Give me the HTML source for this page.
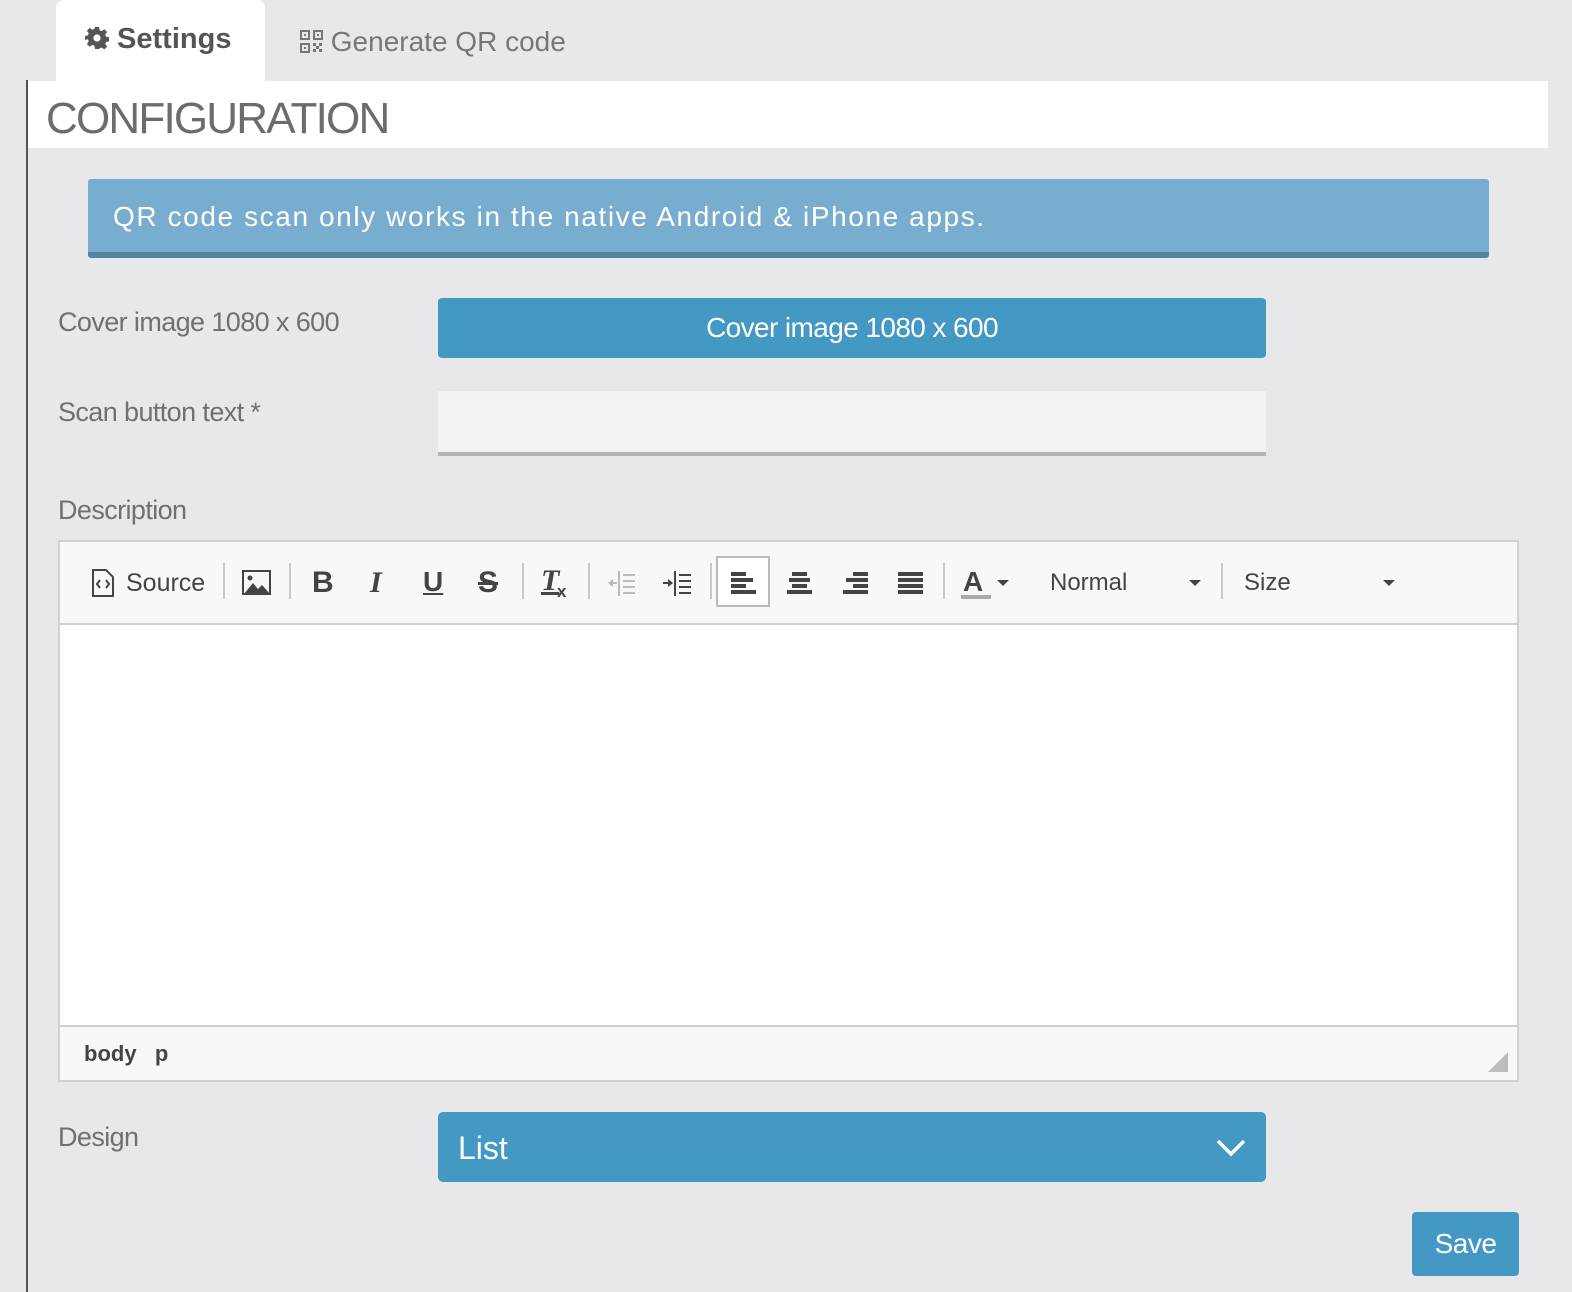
<!DOCTYPE html>
<html><head><meta charset="utf-8"><style>
*{box-sizing:border-box;margin:0;padding:0}
body{width:1572px;height:1292px;background:#e8e8ea;font-family:"Liberation Sans",sans-serif;position:relative;overflow:hidden}
.a{position:absolute}
.lbl{color:#707070;font-size:27px;font-weight:300;letter-spacing:-0.6px}
.sep{position:absolute;top:563px;width:2px;height:36px;background:#c8c8c8}
.ic{position:absolute}
</style></head><body>
<div class="a" style="left:56px;top:0;width:209px;height:82px;background:#fff;border-radius:8px 8px 0 0"></div>
<div class="a" style="left:85px;top:23px;font-size:29px;font-weight:bold;color:#555">
<svg width="24" height="24" viewBox="0 0 24 24" style="vertical-align:-2px"><path fill="#555" d="M10 1h4l.6 3.2 2 .9 2.7-1.9 2.8 2.8-1.9 2.7.9 2 3.2.6v4l-3.2.6-.9 2 1.9 2.7-2.8 2.8-2.7-1.9-2 .9L14 23h-4l-.6-3.2-2-.9-2.7 1.9-2.8-2.8 1.9-2.7-.9-2L-.3 14v-4l3.2-.6.9-2L1.9 4.7 4.7 1.9l2.7 1.9 2-.9z"/><circle cx="12" cy="12" r="3.6" fill="#fff"/></svg> Settings</div>
<div class="a" style="left:300px;top:26px;font-size:28px;color:#777;font-weight:300">
<svg width="23" height="23" viewBox="0 0 23 23" style="vertical-align:-2px"><g fill="none" stroke="#777" stroke-width="2"><rect x="1" y="1" width="8" height="8"/><rect x="14" y="1" width="8" height="8"/><rect x="1" y="14" width="8" height="8"/></g><g fill="#777"><rect x="4" y="4" width="2" height="2"/><rect x="17" y="4" width="2" height="2"/><rect x="4" y="17" width="2" height="2"/><rect x="13" y="13" width="3" height="3"/><rect x="19" y="13" width="3" height="3"/><rect x="16" y="16" width="3" height="3"/><rect x="13" y="19" width="3" height="3"/><rect x="19" y="19" width="3" height="3"/></g></svg> Generate QR code</div>
<div class="a" style="left:26px;top:80px;width:2px;height:1212px;background:#555"></div>
<div class="a" style="left:28px;top:81px;width:1520px;height:67px;background:#fff"></div>
<div class="a" style="left:46px;top:94px;font-size:44px;color:#6c6c6c;font-weight:300;letter-spacing:-1.8px">CONFIGURATION</div>
<div class="a" style="left:88px;top:179px;width:1401px;height:79px;background:#79adcf;border-bottom:6px solid #5483a0;border-radius:3px"></div>
<div class="a" style="left:113px;top:201px;font-size:28px;color:#fff;letter-spacing:1.6px">QR code scan only works in the native Android &amp; iPhone apps.</div>
<div class="a lbl" style="left:58px;top:307px">Cover image 1080 x 600</div>
<div class="a" style="left:438px;top:298px;width:828px;height:60px;background:#4398c4;border-radius:4px;color:#fff;font-size:28px;text-align:center;line-height:60px;letter-spacing:-0.6px">Cover image 1080 x 600</div>
<div class="a lbl" style="left:58px;top:397px">Scan button text *</div>
<div class="a" style="left:438px;top:389px;width:828px;height:67px;background:#f3f3f3;border-top:2px solid #e4e4e4;border-bottom:4px solid #b5b5b5"></div>
<div class="a lbl" style="left:58px;top:495px">Description</div>
<div class="a" style="left:58px;top:540px;width:1461px;height:542px;border:2px solid #d1d1d1;background:#fff"></div>
<div class="a" style="left:60px;top:542px;width:1457px;height:83px;background:#f8f8f8;border-bottom:2px solid #d1d1d1"></div>
<div class="a" style="left:60px;top:1025px;width:1457px;height:55px;background:#f8f8f8;border-top:2px solid #d1d1d1"></div>
<div class="a" style="left:84px;top:1041px;font-size:22px;font-weight:bold;color:#444">body&nbsp;&nbsp;&nbsp;p</div>
<svg class="a" style="left:1488px;top:1052px" width="22" height="20"><path d="M20 0V20H0z" fill="#bdbdbd"/></svg>
<svg class="ic" style="left:91px;top:569px" width="24" height="28" viewBox="0 0 24 28"><path d="M2 1h13l7 7v19H2z" fill="none" stroke="#444" stroke-width="2"/><path d="M9 11l-3 4 3 4M15 11l3 4-3 4" fill="none" stroke="#444" stroke-width="2"/></svg>
<div class="a" style="left:126px;top:569px;font-size:25px;color:#444">Source</div>
<div class="sep" style="left:223px"></div>
<svg class="ic" style="left:242px;top:570px" width="29" height="25"><rect x="1" y="1" width="27" height="23" fill="none" stroke="#444" stroke-width="2"/><circle cx="8" cy="8" r="2.5" fill="#444"/><path d="M2 24L11 13l5 6 4-4 8 9z" fill="#444"/></svg>
<div class="sep" style="left:289px"></div>
<div class="a" style="left:312px;top:566px;font-size:30px;font-weight:bold;color:#444">B</div>
<div class="a" style="left:370px;top:566px;font-size:30px;font-weight:bold;font-style:italic;color:#444;font-family:'Liberation Serif',serif">I</div>
<div class="a" style="left:423px;top:566px;font-size:28px;font-weight:bold;color:#444;text-decoration:underline">U</div>
<div class="a" style="left:478px;top:566px;font-size:30px;font-weight:bold;color:#444;text-decoration:line-through">S</div>
<div class="sep" style="left:522px"></div>
<div class="a" style="left:541px;top:564px;font-size:30px;font-weight:bold;font-style:italic;color:#444;font-family:'Liberation Serif',serif;text-decoration:underline">T</div>
<div class="a" style="left:557px;top:582px;font-size:17px;font-weight:bold;color:#444">x</div>
<div class="sep" style="left:588px"></div>
<svg class="ic" style="left:607px;top:571px" width="30" height="25"><g fill="#bbb"><rect x="11" y="0" width="2" height="25"/><rect x="16" y="3" width="12" height="2"/><rect x="16" y="9" width="12" height="2"/><rect x="16" y="15" width="12" height="2"/><rect x="16" y="21" width="12" height="2"/><path d="M1 12l5-4v8z"/><rect x="5" y="11" width="5" height="2"/></g></svg>
<svg class="ic" style="left:663px;top:571px" width="30" height="25"><g fill="#444"><rect x="11" y="0" width="2" height="25"/><rect x="16" y="3" width="12" height="2"/><rect x="16" y="9" width="12" height="2"/><rect x="16" y="15" width="12" height="2"/><rect x="16" y="21" width="12" height="2"/><path d="M10 12l-5-4v8z"/><rect x="0" y="11" width="5" height="2"/></g></svg>
<div class="sep" style="left:710px"></div>
<div class="a" style="left:716px;top:556px;width:54px;height:51px;border:2px solid #bbb;background:#fff"></div>
<svg class="ic" style="left:731px;top:572px" width="25" height="22"><g fill="#444"><rect y="0" width="15" height="4"/><rect y="6" width="22" height="4"/><rect y="12" width="15" height="4"/><rect y="18" width="25" height="4"/></g></svg>
<svg class="ic" style="left:787px;top:572px" width="25" height="22"><g fill="#444"><rect x="5" y="0" width="15" height="4"/><rect x="2" y="6" width="21" height="4"/><rect x="5" y="12" width="15" height="4"/><rect y="18" width="25" height="4"/></g></svg>
<svg class="ic" style="left:843px;top:572px" width="25" height="22"><g fill="#444"><rect x="10" y="0" width="15" height="4"/><rect x="3" y="6" width="22" height="4"/><rect x="10" y="12" width="15" height="4"/><rect y="18" width="25" height="4"/></g></svg>
<svg class="ic" style="left:898px;top:572px" width="25" height="22"><g fill="#444"><rect y="0" width="25" height="4"/><rect y="6" width="25" height="4"/><rect y="12" width="25" height="4"/><rect y="18" width="25" height="4"/></g></svg>
<div class="sep" style="left:943px"></div>
<div class="a" style="left:963px;top:566px;font-size:28px;font-weight:bold;color:#444">A</div>
<div class="a" style="left:961px;top:595px;width:30px;height:4px;background:#aaa"></div>
<svg class="ic" style="left:997px;top:580px" width="12" height="7"><path d="M0 0h12L6 6z" fill="#444"/></svg>
<div class="a" style="left:1050px;top:569px;font-size:24px;color:#444">Normal</div>
<svg class="ic" style="left:1189px;top:580px" width="12" height="7"><path d="M0 0h12L6 6z" fill="#444"/></svg>
<div class="sep" style="left:1221px"></div>
<div class="a" style="left:1244px;top:569px;font-size:24px;color:#444">Size</div>
<svg class="ic" style="left:1383px;top:580px" width="12" height="7"><path d="M0 0h12L6 6z" fill="#444"/></svg>
<div class="a lbl" style="left:58px;top:1122px">Design</div>
<div class="a" style="left:438px;top:1112px;width:828px;height:70px;background:#4398c4;border-radius:5px"></div>
<div class="a" style="left:458px;top:1130px;font-size:32px;color:#fff;font-weight:300">List</div>
<svg class="a" style="left:1216px;top:1138px" width="30" height="20"><path d="M2 3l13 13L28 3" fill="none" stroke="#fff" stroke-width="3.5"/></svg>
<div class="a" style="left:1412px;top:1212px;width:107px;height:64px;background:#4398c4;border-radius:4px;color:#fff;font-size:28px;text-align:center;line-height:64px;letter-spacing:-0.5px">Save</div>
</body></html>
